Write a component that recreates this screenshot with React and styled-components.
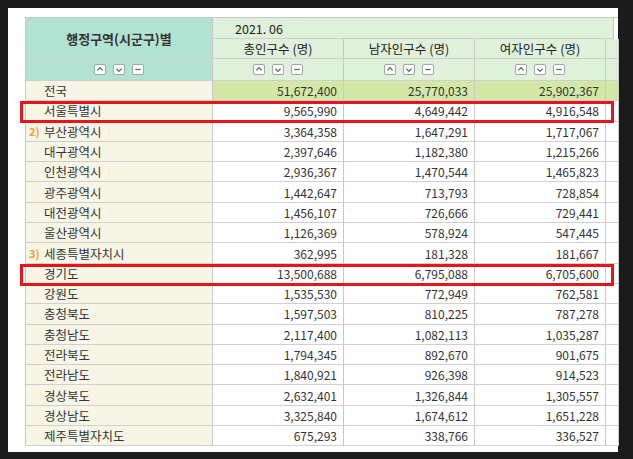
import React from 'react';
import styled, { createGlobalStyle } from 'styled-components';

const Global = createGlobalStyle`
  html, body { margin: 0; background: #1b1b1b; }
  body { font-family: "Noto Sans CJK KR", "DejaVu Sans", sans-serif; }
`;

const rows = [
  ['전국', '51,672,400', '25,770,033', '25,902,367'],
  ['서울특별시', '9,565,990', '4,649,442', '4,916,548', '', true],
  ['부산광역시', '3,364,358', '1,647,291', '1,717,067', '2)'],
  ['대구광역시', '2,397,646', '1,182,380', '1,215,266'],
  ['인천광역시', '2,936,367', '1,470,544', '1,465,823'],
  ['광주광역시', '1,442,647', '713,793', '728,854'],
  ['대전광역시', '1,456,107', '726,666', '729,441'],
  ['울산광역시', '1,126,369', '578,924', '547,445'],
  ['세종특별자치시', '362,995', '181,328', '181,667', '3)'],
  ['경기도', '13,500,688', '6,795,088', '6,705,600', '', true],
  ['강원도', '1,535,530', '772,949', '762,581'],
  ['충청북도', '1,597,503', '810,225', '787,278'],
  ['충청남도', '2,117,400', '1,082,113', '1,035,287'],
  ['전라북도', '1,794,345', '892,670', '901,675'],
  ['전라남도', '1,840,921', '926,398', '914,523'],
  ['경상북도', '2,632,401', '1,326,844', '1,305,557'],
  ['경상남도', '3,325,840', '1,674,612', '1,651,228'],
  ['제주특별자치도', '675,293', '338,766', '336,527'],
];

const cols = '187px 131px 131px 131px 8px';

const Panel = styled.div`
  margin: 8px 0 0 8px;
  width: 610px;
  height: 444px;
  background: #fff;
  padding: 9px 0 0 17px;
  box-sizing: border-box;
  font-size: 12px;
  color: #333;
`;

const Table = styled.div`
  display: grid;
  grid-template-columns: ${cols};
  border-top: 1px solid #c8c8c8;
  border-left: 1px solid #c8c8c8;
`;

const Cell = styled.div`
  box-sizing: border-box;
  border-right: 1px solid #c8c8c8;
  border-bottom: 1px solid #cfcfcf;
  display: flex;
  align-items: center;
  justify-content: ${p => p.$align || 'flex-end'};
  padding: 0 6px;
  height: ${p => p.$h || 20.3}px;
  background: ${p => p.$bg || '#fff'};
  white-space: nowrap;
  overflow: hidden;
`;

const HeadCell = styled(Cell)`
  font-size: 12.5px;
  color: #222;
`;

const HeadTitle = styled(Cell)`
  grid-row: span 2;
  height: auto;
  background: #b2e2d2;
  font-weight: bold;
  font-size: 13px;
  color: #333;
  justify-content: center;
`;

const Name = styled(Cell)`
  position: relative;
  background: #f6f5e6;
  justify-content: flex-start;
  padding-left: 18px;
  font-size: 12.5px;
  overflow: visible;
`;

const Note = styled.span`
  position: absolute;
  left: 3px;
  color: #f0a030;
  font-weight: bold;
  font-size: 11px;
`;

const Highlight = styled.div`
  position: absolute;
  left: -6px;
  top: 0;
  width: 594px;
  height: 22px;
  border: 3px solid #e8141c;
  box-sizing: border-box;
  pointer-events: none;
  z-index: 2;
`;

const Btns = styled.div`
  display: flex;
  gap: 7px;
`;

const Btn = styled.span`
  width: 10px;
  height: 9px;
  border: 1px solid #9aa;
  border-radius: 2px;
  background: #fff;
  display: flex;
  align-items: center;
  justify-content: center;
`;

const Sorters = () => (
  <Btns>
    {['M2 6 L5 3 L8 6', 'M2 4 L5 7 L8 4', 'M2 5 L8 5'].map(d => (
      <Btn key={d}>
        <svg width="10" height="9" viewBox="0 0 10 10"><path d={d} stroke="#667" strokeWidth="1.4" fill="none" /></svg>
      </Btn>
    ))}
  </Btns>
);

export default function App() {
  return (
    <>
      <Global />
      <Panel>
        <Table>
          <HeadTitle>행정구역(시군구)별</HeadTitle>
          <HeadCell $bg="#dff0db" $h={21} $align="flex-start" style={{ gridColumn: 'span 4', paddingLeft: 22 }}>2021. 06</HeadCell>
          <HeadCell $bg="#dff0db" $h={20} $align="center">총인구수 (명)</HeadCell>
          <HeadCell $bg="#dff0db" $h={20} $align="center">남자인구수 (명)</HeadCell>
          <HeadCell $bg="#dff0db" $h={20} $align="center">여자인구수 (명)</HeadCell>
          <HeadCell $bg="#dff0db" $h={20} />
          <Cell $bg="#b2e2d2" $h={22} $align="center"><Sorters /></Cell>
          <Cell $bg="#dff0db" $h={22} $align="center"><Sorters /></Cell>
          <Cell $bg="#dff0db" $h={22} $align="center"><Sorters /></Cell>
          <Cell $bg="#dff0db" $h={22} $align="center"><Sorters /></Cell>
          <Cell $bg="#dff0db" $h={22} />
          {rows.map(([name, a, b, c, note, hl], i) => {
            const bg = i === 0 ? '#d3e7a6' : '#fff';
            return (
              <React.Fragment key={name}>
                <Name>
                  {note && <Note>{note}</Note>}
                  {name}
                  {hl && <Highlight />}
                </Name>
                <Cell $bg={bg}>{a}</Cell>
                <Cell $bg={bg}>{b}</Cell>
                <Cell $bg={bg}>{c}</Cell>
                <Cell $bg={bg} />
              </React.Fragment>
            );
          })}
        </Table>
      </Panel>
    </>
  );
}
